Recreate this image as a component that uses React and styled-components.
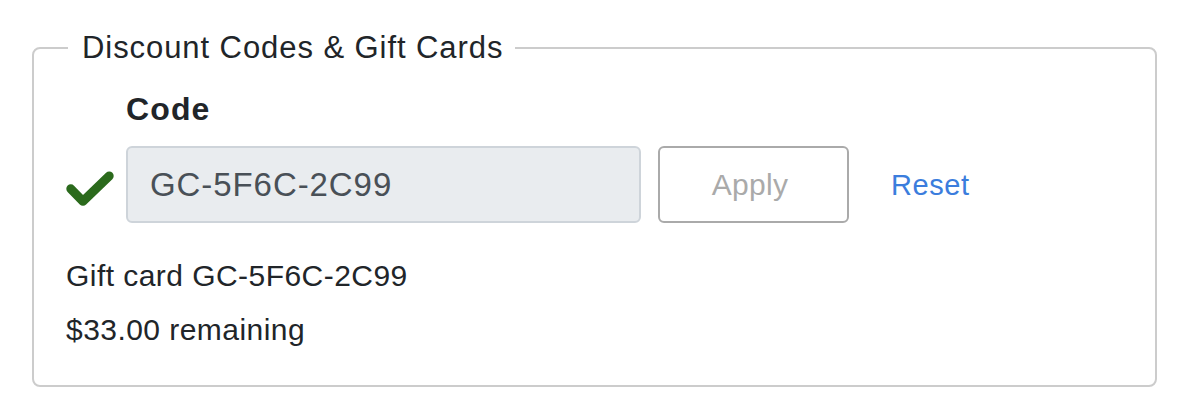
import React from "react";
import styled, { createGlobalStyle } from "styled-components";

const Global = createGlobalStyle`
  html, body { margin: 0; padding: 0; background: #ffffff; }
  body { font-family: "Liberation Sans", Arial, sans-serif; color: #212529; }
`;

const Page = styled.div`
  padding: 30px 25px 0 32px;
`;

const Fieldset = styled.fieldset`
  box-sizing: border-box;
  width: 1125px;
  height: 357px;
  margin: 0;
  padding: 0 32px;
  border: 2px solid #cccccc;
  border-radius: 8px;
  min-inline-size: 0;
`;

const Legend = styled.legend`
  margin-left: 2px;
  padding: 0 12px 0 14px;
  font-size: 31px;
  line-height: 36px;
  letter-spacing: 0.03em;
  color: #212529;
`;

const Label = styled.div`
  margin: 23px 0 0 60px;
  font-size: 32px;
  line-height: 40px;
  font-weight: 700;
  letter-spacing: 0.035em;
  color: #212529;
`;

const Row = styled.div`
  display: flex;
  align-items: center;
  margin-top: 17px;
`;

const CheckCell = styled.div`
  width: 60px;
  display: flex;
  align-items: center;
  padding-top: 9px;
`;

const Input = styled.input`
  box-sizing: border-box;
  width: 515px;
  height: 77px;
  padding: 0 22px;
  border: 2px solid #ced4da;
  border-radius: 6px;
  background: #e9ecef;
  color: #495057;
  font-family: "Liberation Sans", Arial, sans-serif;
  font-size: 33px;
  letter-spacing: 0.028em;
  outline: none;
`;

const Button = styled.button`
  box-sizing: border-box;
  margin-left: 17px;
  width: 191px;
  height: 77px;
  padding: 0 7px 0 0;
  border: 2px solid #aaaaaa;
  border-radius: 6px;
  background: #ffffff;
  color: #aaaaaa;
  font-family: "Liberation Sans", Arial, sans-serif;
  font-size: 30px;
  letter-spacing: 0.01em;
  cursor: default;
`;

const Link = styled.a`
  margin-left: 42px;
  color: #3b7ddd;
  font-size: 29px;
  letter-spacing: 0.02em;
  text-decoration: none;
  padding-top: 2px;
`;

const Info = styled.div`
  margin-top: ${(p) => p.$top}px;
  font-size: 30px;
  line-height: 40px;
  letter-spacing: 0.015em;
  color: #212529;
`;

const Check = () => (
  <svg width="48" height="36" viewBox="0 0 48 36">
    <polyline
      points="4.8,17.8 17,30.3 43.2,5"
      fill="none"
      stroke="#2b6a1c"
      strokeWidth="9"
      strokeLinecap="round"
      strokeLinejoin="round"
    />
  </svg>
);

export default function App() {
  return (
    <>
      <Global />
      <Page>
        <Fieldset>
          <Legend>Discount Codes &amp; Gift Cards</Legend>
          <Label>Code</Label>
          <Row>
            <CheckCell>
              <Check />
            </CheckCell>
            <Input value="GC-5F6C-2C99" readOnly />
            <Button type="button">Apply</Button>
            <Link href="#">Reset</Link>
          </Row>
          <Info $top={33}>Gift card GC-5F6C-2C99</Info>
          <Info $top={14}>$33.00 remaining</Info>
        </Fieldset>
      </Page>
    </>
  );
}
